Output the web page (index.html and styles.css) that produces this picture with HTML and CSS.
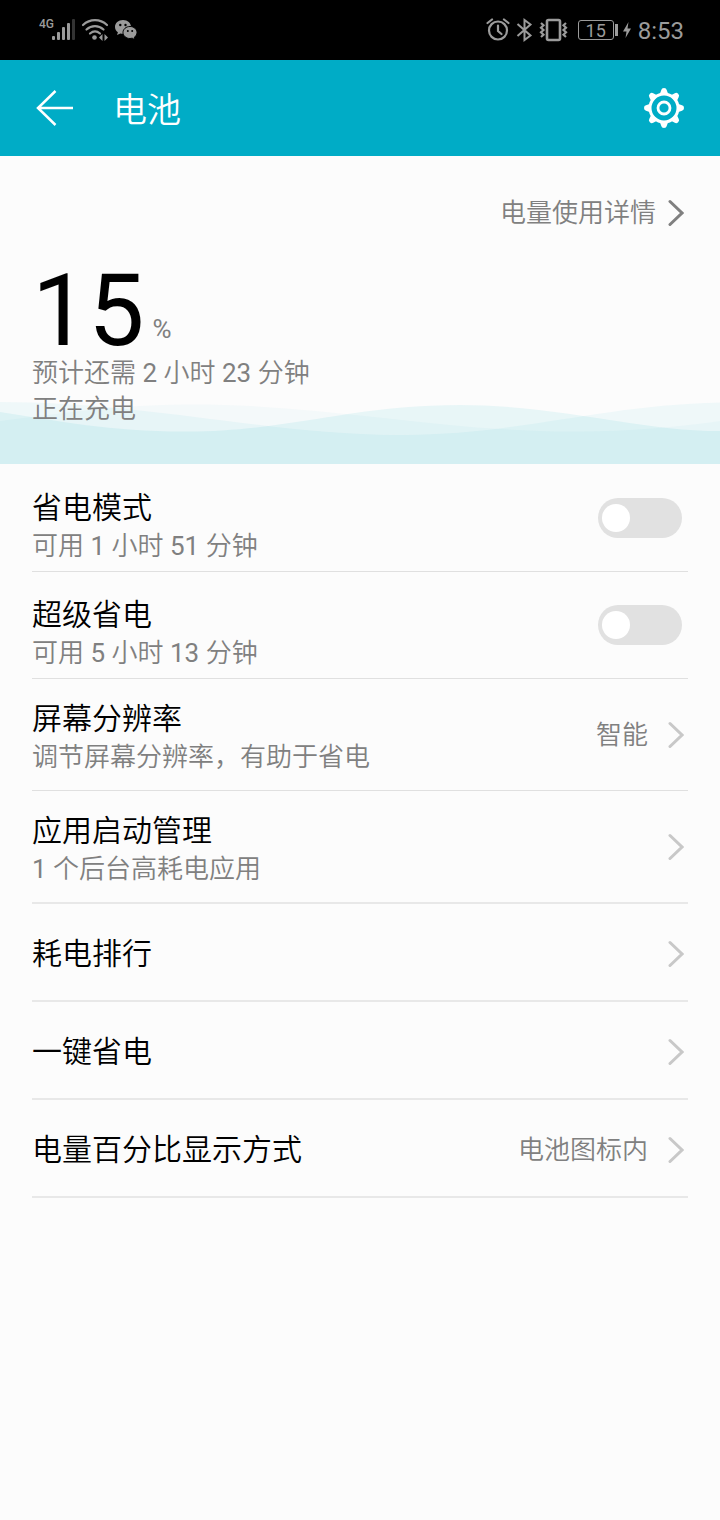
FILE: index.html
```html
<!DOCTYPE html>
<html lang="zh-CN">
<head>
  <meta charset="UTF-8" />
  <meta name="viewport" content="width=device-width, initial-scale=1.0"/>
  <title>电池</title>
  <link rel="stylesheet" href="styles.css">
</head>
<body>

<!-- Status bar -->
<div class="status-bar">
  <div class="status-left">
    <span class="network">4G</span>
    <svg class="signal" width="24" height="24" viewBox="0 0 24 24">
      <g fill="#9b9b9b">
        <rect x="0" y="18" width="3" height="4" rx="1"/>
        <rect x="5" y="14" width="3" height="8" rx="1"/>
        <rect x="10" y="9" width="3" height="13" rx="1"/>
        <rect x="15" y="5" width="3" height="17" rx="1"/>
      </g>
      <rect x="20" y="1" width="3" height="21" rx="1" fill="#333"/>
    </svg>
    <svg class="wifi" width="28" height="24" viewBox="0 0 28 24">
      <g fill="none" stroke="#9b9b9b" stroke-width="2.2" stroke-linecap="round">
        <path d="M2 7C9 .6 19 .6 26 7"/>
        <path d="M5.500 11.500C10.500 7 17.500 7 22.500 11.500"/>
        <path d="M9 15.500C12 13 16 13 19 15.500"/>
      </g>
      <g fill="#9b9b9b">
        <circle cx="13.500" cy="19.500" r="2.300"/>
        <path d="M21.500 16v7L18 19.500zM23.500 16v7l3.500-3.500z"/>
      </g>
    </svg>
    <svg class="wechat" width="24" height="24" viewBox="0 0 24 24">
      <g fill="#9b9b9b">
        <path d="M9 2C4.300 2 1 5.100 1 8.900c0 2.200 1.100 4 2.900 5.300L3 17l3.400-1.600c.8.200 1.700.4 2.600.4 4.700 0 8-3.100 8-6.900S13.700 2 9 2z"/>
        <path stroke="#000" stroke-width="1" d="M16 8.500c-4 0-7 2.700-7 6s3 6 7 6c.8 0 1.500-.1 2.200-.3L21 21.800l-.7-2.500c1.600-1.100 2.700-2.800 2.700-4.800 0-3.300-3-6-7-6z"/>
      </g>
      <g fill="#000">
        <circle cx="6.300" cy="7" r="1.200"/>
        <circle cx="11.500" cy="7" r="1.200"/>
        <circle cx="13.800" cy="13" r="1"/>
        <circle cx="18.200" cy="13" r="1"/>
      </g>
    </svg>
  </div>
  <div class="status-right">
    <svg width="24" height="24" viewBox="0 0 24 24" fill="none" stroke="#9b9b9b" stroke-width="2.200">
      <circle cx="12" cy="12.500" r="9"/>
      <path d="M12 7.500v5.500l3.500 3M1.500 5L6 1.500M22.500 5L18 1.500" stroke-linecap="round"/>
    </svg>
    <svg width="20" height="24" viewBox="0 0 20 24" fill="none" stroke="#9b9b9b" stroke-width="2">
      <path d="M3.500 6l13 11.500-6 4.500V2l6 4.500L3.500 18"/>
    </svg>
    <svg width="30" height="24" viewBox="0 0 30 24" fill="none" stroke="#9b9b9b">
      <rect x="9" y="2" width="13" height="20" rx="1.500" stroke-width="2.600"/>
      <path stroke-width="2.200" d="M3 5l2.500 2.300L3 9.700 5.500 12 3 14.300l2.500 2.400L3 19M28 5l-2.500 2.300L28 9.700 25.500 12l2.500 2.300-2.500 2.400L28 19"/>
    </svg>
    <span class="battery">15</span>
    <svg class="bolt" width="10" height="24" viewBox="0 0 10 24">
      <path fill="#9b9b9b" d="M6.500 4L1 13.500h3.500L3.500 20 9 10.500H5.500z"/>
    </svg>
    <span class="clock">8:53</span>
  </div>
</div>

<!-- App bar -->
<header class="app-bar">
  <button class="icon-btn" type="button" aria-label="返回">
    <svg width="40" height="40" viewBox="0 0 40 40" fill="none" stroke="#fff" stroke-width="2.500">
      <path d="M20.500 3L3 20l17.500 17M3 20h35"/>
    </svg>
  </button>
  <h1>电池</h1>
  <button class="icon-btn" type="button" aria-label="设置">
    <svg width="40" height="40" viewBox="0 0 40 40">
      <g fill="none" stroke="#fff">
        <circle cx="20" cy="20" r="14" stroke-width="3"/>
        <circle cx="20" cy="20" r="6" stroke-width="2.800"/>
      </g>
      <g fill="#fff">
        <path id="tooth" d="M15.500 7L17.300 2q.3-2 2.700-2T22.700 2l1.800 5z"/>
        <use href="#tooth" transform="rotate(45 20 20)"/>
        <use href="#tooth" transform="rotate(90 20 20)"/>
        <use href="#tooth" transform="rotate(135 20 20)"/>
        <use href="#tooth" transform="rotate(180 20 20)"/>
        <use href="#tooth" transform="rotate(225 20 20)"/>
        <use href="#tooth" transform="rotate(270 20 20)"/>
        <use href="#tooth" transform="rotate(315 20 20)"/>
      </g>
    </svg>
  </button>
</header>

<main>
  <!-- Charge level -->
  <section class="summary">
    <svg class="waves" viewBox="0 0 720 64" preserveAspectRatio="none" fill="#00adbe">
      <path fill-opacity=".03" d="M0 21C70 12 120 4.500 195 4.500C330 4.500 440 31.500 575 31.500C630 31.500 675 27 720 21V64H0z"/>
      <path fill-opacity=".05" d="M0 2C150 2 270 35 400 35C520 35 600 5 720 2.500V64H0z"/>
      <path fill-opacity=".08" d="M0 12C60 21 110 31.500 185 31.500C290 31.500 350 5 460 5C560 5 640 31 720 31V64H0z"/>
    </svg>
    <a class="details" href="#">
      电量使用详情
      <svg class="chevron" width="16" height="28" viewBox="0 0 16 28"><path d="M2 2.500l12 11.500L2 25.500"/></svg>
    </a>
    <p class="level">15<span>%</span></p>
    <p class="note">预计还需 2 小时 23 分钟</p>
    <p class="note">正在充电</p>
  </section>

  <!-- Settings -->
  <ul class="settings">
    <li>
      <label class="row switch-row">
        <span class="text">
          <span class="title">省电模式</span>
          <span class="sub">可用 1 小时 51 分钟</span>
        </span>
        <input class="switch" type="checkbox" role="switch">
      </label>
    </li>
    <li>
      <label class="row switch-row">
        <span class="text">
          <span class="title">超级省电</span>
          <span class="sub">可用 5 小时 13 分钟</span>
        </span>
        <input class="switch" type="checkbox" role="switch">
      </label>
    </li>
    <li>
      <a class="row double-row" href="#">
        <span class="text">
          <span class="title">屏幕分辨率</span>
          <span class="sub">调节屏幕分辨率，有助于省电</span>
        </span>
        <span class="value">智能</span>
        <svg class="chevron" width="16" height="28" viewBox="0 0 16 28"><path d="M2 2.500l12 11.500L2 25.500"/></svg>
      </a>
    </li>
    <li class="thick">
      <a class="row double-row" href="#">
        <span class="text">
          <span class="title">应用启动管理</span>
          <span class="sub">1 个后台高耗电应用</span>
        </span>
        <svg class="chevron" width="16" height="28" viewBox="0 0 16 28"><path d="M2 2.500l12 11.500L2 25.500"/></svg>
      </a>
    </li>
    <li class="thick">
      <a class="row single-row" href="#">
        <span class="text title">耗电排行</span>
        <svg class="chevron" width="16" height="28" viewBox="0 0 16 28"><path d="M2 2.500l12 11.500L2 25.500"/></svg>
      </a>
    </li>
    <li class="thick">
      <a class="row single-row" href="#">
        <span class="text title">一键省电</span>
        <svg class="chevron" width="16" height="28" viewBox="0 0 16 28"><path d="M2 2.500l12 11.500L2 25.500"/></svg>
      </a>
    </li>
    <li class="thick">
      <a class="row single-row" href="#">
        <span class="text title">电量百分比显示方式</span>
        <span class="value">电池图标内</span>
        <svg class="chevron" width="16" height="28" viewBox="0 0 16 28"><path d="M2 2.500l12 11.500L2 25.500"/></svg>
      </a>
    </li>
  </ul>
</main>

</body>
</html>
```
FILE: styles.css
```css
* {
  margin: 0;
  padding: 0;
  box-sizing: border-box;
}

body {
  font-family: Roboto, "Noto Sans CJK SC DemiLight", "Noto Sans CJK SC", sans-serif;
  background: #fcfcfc;
  color: #000;
}

a {
  color: inherit;
  text-decoration: none;
}

svg {
  display: block;
  flex: none;
}

/* Status bar */
.status-bar {
  display: flex;
  justify-content: space-between;
  height: 60px;
  padding: 0 36px 0 39px;
  background: #000;
  color: #9b9b9b;
}

.status-left,
.status-right {
  display: flex;
  align-items: center;
}

.network {
  align-self: flex-start;
  width: 13px;
  padding-top: 16px;
  font-size: 12px;
  font-weight: 500;
  line-height: 16px;
}

.wifi {
  margin-left: 5px;
}

.wechat {
  margin-left: 5px;
}

.status-right {
  gap: 4px;
}

.battery {
  position: relative;
  width: 36px;
  height: 20px;
  margin: 0 4px 0 6px;
  border: 1px solid #9b9b9b;
  border-radius: 3px;
  font-size: 18px;
  line-height: 19px;
  text-align: center;
}

.battery::after {
  content: "";
  position: absolute;
  top: 3px;
  right: -5px;
  width: 3px;
  height: 12px;
  background: #9b9b9b;
}

.clock {
  margin-left: 2px;
  padding-top: 2px;
  font-size: 24px;
  line-height: 28px;
}

/* App bar */
.app-bar {
  display: flex;
  align-items: center;
  height: 96px;
  padding: 0 36px 0 35px;
  background: #00acc6;
  color: #fff;
}

.app-bar h1 {
  flex: 1;
  margin-left: 38px;
  padding-top: 4px;
  font-size: 34px;
  font-weight: 400;
  line-height: 48px;
}

.icon-btn {
  width: 40px;
  height: 40px;
  border: none;
  background: none;
  cursor: pointer;
}

/* Charge level */
.summary {
  position: relative;
  padding: 37px 32px;
  margin-bottom: 1px;
}

.waves {
  position: absolute;
  left: 0;
  bottom: 0;
  z-index: -1;
  width: 100%;
  height: 64px;
}

.details {
  display: flex;
  align-items: center;
  justify-content: flex-end;
  gap: 12px;
  padding-right: 4px;
  color: #808080;
  font-size: 26px;
  line-height: 40px;
}

.chevron {
  fill: none;
  stroke: #c8c8c8;
  stroke-width: 3px;
  stroke-linecap: round;
}

.details .chevron {
  stroke: #808080;
}

.level {
  display: flex;
  align-items: flex-end;
  gap: 8px;
  padding-top: 34px;
  font-size: 100px;
  line-height: 88px;
}

.level span {
  padding-bottom: 8px;
  color: #808080;
  font-size: 26px;
  line-height: 36px;
}

.note {
  color: #808080;
  font-size: 26px;
  line-height: 36px;
}

/* Settings */
.settings {
  padding: 0 32px;
  list-style: none;
}

.settings li {
  border-bottom: 1px solid #e0e0e0;
}

.settings .thick {
  border-bottom: 2px solid #e8e8e8;
}

.row {
  display: flex;
  align-items: center;
  padding-right: 4px;
}

.text {
  flex: 1;
}

.title {
  display: block;
  font-size: 30px;
  line-height: 40px;
}

.sub {
  display: block;
  color: #808080;
  font-size: 26px;
  line-height: 36px;
}

.value {
  margin-right: 20px;
  color: #808080;
  font-size: 26px;
  line-height: 36px;
}

.switch-row {
  padding-right: 6px;
}

.switch-row .text {
  padding: 23px 0 7px;
}

.double-row .text {
  padding: 20px 0 15px;
}

.single-row {
  height: 96px;
  padding-top: 4px;
}

.switch {
  flex: none;
  width: 84px;
  height: 40px;
  padding: 6px 4px;
  border-radius: 20px;
  background: #e1e1e1;
  appearance: none;
  cursor: pointer;
}

.switch::before {
  content: "";
  display: block;
  width: 28px;
  height: 28px;
  border-radius: 50%;
  background: #fff;
}

.switch:checked {
  background: #00acc6;
}

.switch:checked::before {
  margin-left: auto;
}
```
